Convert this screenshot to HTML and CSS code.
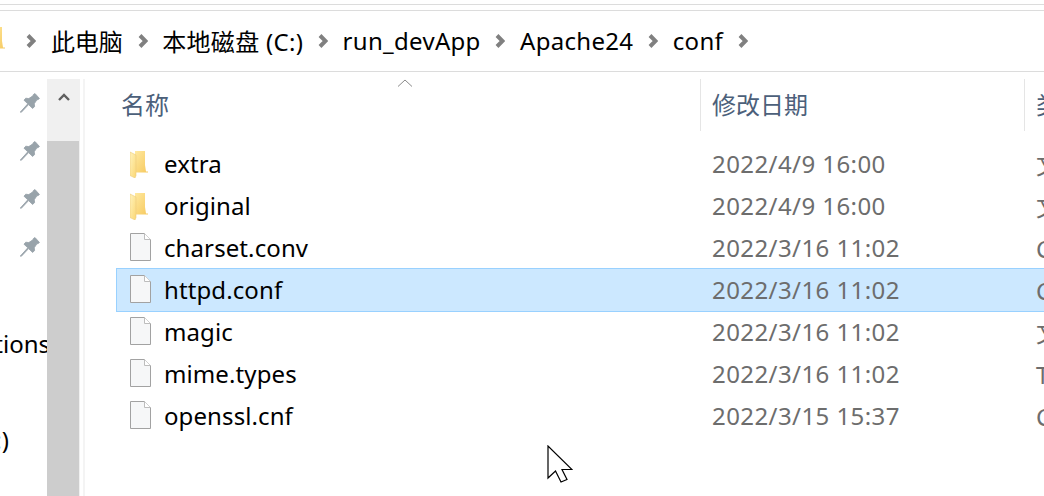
FILE: index.html
```html
<!DOCTYPE html>
<html lang="zh-CN">

<head>
    <meta charset="UTF-8">
    <title>conf</title>
    <link rel="stylesheet" href="styles.css">
</head>

<body>
    <svg class="defs" width="0" height="0">
        <defs>
            <linearGradient id="foldergrad" x1="0" y1="0" x2="1" y2="1">
                <stop offset="0" stop-color="#ffe99f" />
                <stop offset="1" stop-color="#f6c95f" />
            </linearGradient>
            <linearGradient id="flapgrad" x1="0" y1="0" x2="1" y2="1">
                <stop offset="0" stop-color="#fff3bd" />
                <stop offset="1" stop-color="#fbd774" />
            </linearGradient>
            <symbol id="folder" viewBox="0 0 18 27">
                <path d="M5 0H15V14L16 20.5H18V21.5H5Z" fill="url(#foldergrad)" />
                <path d="M0 1L6 4V24.5L5 27L0 24.5Z" fill="url(#flapgrad)" stroke="#eccb7c" stroke-width="0.6" />
            </symbol>
            <symbol id="file" viewBox="0 0 21 28">
                <path d="M0.5 0.5H14.5L20.5 6.5V27.5H0.5Z" fill="#f6f7f8" stroke="#a2a2a2" />
                <path d="M14.5 0.5V6.5H20.5" fill="#fff" stroke="#bdbdbd" />
            </symbol>
            <symbol id="pin" viewBox="0 0 20 20">
                <path d="M15 0.6L19.4 5.4L18 6.8L17 6.6L14.2 10.8L14.6 13.6L12.6 15.4L8.6 11.6L1 19.6L0.4 19L7.8 10.8L4 7.2L5.8 5.2L8.8 5.6L13 2.8L13.4 1.6Z" fill="#98a3aa" stroke="#98a3aa" stroke-width="0.9" />
            </symbol>
            <symbol id="crumbarrow" viewBox="0 0 10 14">
                <path d="M2 1.5L7.5 7L2 12.5" fill="none" stroke="#808080" stroke-width="4" />
            </symbol>
        </defs>
    </svg>

    <div class="titlestrip"></div>

    <div class="breadcrumb">
        <svg class="crumb_folder" viewBox="0 0 18 27"><use href="#folder" /></svg>
        <svg class="crumb_arrow"><use href="#crumbarrow" /></svg>
        <span>此电脑</span>
        <svg class="crumb_arrow"><use href="#crumbarrow" /></svg>
        <span class="crumb_latin">本地磁盘 (C:)</span>
        <svg class="crumb_arrow"><use href="#crumbarrow" /></svg>
        <span class="crumb_latin">run_devApp</span>
        <svg class="crumb_arrow"><use href="#crumbarrow" /></svg>
        <span class="crumb_latin">Apache24</span>
        <svg class="crumb_arrow"><use href="#crumbarrow" /></svg>
        <span class="crumb_latin">conf</span>
        <svg class="crumb_arrow"><use href="#crumbarrow" /></svg>
    </div>

    <div class="main">
        <div class="sidebar">
            <div class="side_row"><svg class="pin"><use href="#pin" /></svg></div>
            <div class="side_row"><svg class="pin"><use href="#pin" /></svg></div>
            <div class="side_row"><svg class="pin"><use href="#pin" /></svg></div>
            <div class="side_row"><svg class="pin"><use href="#pin" /></svg></div>
            <div class="side_row"></div>
            <div class="side_row side_apps">Applications</div>
            <div class="side_row"></div>
            <div class="side_row side_drive">(D:)</div>
        </div>

        <div class="scrollbar">
            <div class="scroll_btn">
                <svg class="scroll_arrow" viewBox="0 0 12 8"><path d="M1 7L6 2L11 7" fill="none" stroke="#5f5f5f" stroke-width="2.4" /></svg>
            </div>
            <div class="scroll_thumb"></div>
        </div>

        <div class="filelist">
            <div class="head">
                <div class="head_cell">名称</div>
                <div class="head_cell head_sep">修改日期</div>
                <div class="head_cell head_sep">类型</div>
                <svg class="sort_caret" viewBox="0 0 16 8"><path d="M1 7.5L8 1L15 7.5" fill="none" stroke="#8a8a8a" /></svg>
            </div>

            <div class="row">
                <div class="name"><svg class="ic_folder"><use href="#folder" /></svg>extra</div>
                <div class="date">2022/4/9 16:00</div>
                <div class="type">文件夹</div>
            </div>
            <div class="row">
                <div class="name"><svg class="ic_folder"><use href="#folder" /></svg>original</div>
                <div class="date">2022/4/9 16:00</div>
                <div class="type">文件夹</div>
            </div>
            <div class="row">
                <div class="name"><svg class="ic_file"><use href="#file" /></svg>charset.conv</div>
                <div class="date">2022/3/16 11:02</div>
                <div class="type">CONV 文件</div>
            </div>
            <div class="row selected">
                <div class="name"><svg class="ic_file"><use href="#file" /></svg>httpd.conf</div>
                <div class="date">2022/3/16 11:02</div>
                <div class="type">CONF 文件</div>
            </div>
            <div class="row">
                <div class="name"><svg class="ic_file"><use href="#file" /></svg>magic</div>
                <div class="date">2022/3/16 11:02</div>
                <div class="type">文件</div>
            </div>
            <div class="row">
                <div class="name"><svg class="ic_file"><use href="#file" /></svg>mime.types</div>
                <div class="date">2022/3/16 11:02</div>
                <div class="type">TYPES 文件</div>
            </div>
            <div class="row">
                <div class="name"><svg class="ic_file"><use href="#file" /></svg>openssl.cnf</div>
                <div class="date">2022/3/15 15:37</div>
                <div class="type">CNF 文件</div>
            </div>
        </div>
    </div>

    <svg class="cursor" viewBox="0 0 26 38">
        <path d="M1 1V33L8.5 26L14 37L20 34.5L15 24.5H25Z" fill="#fff" stroke="#000" stroke-width="1.2" />
    </svg>
</body>

</html>
```

FILE: styles.css
```css
html,
body {
    margin: 0;
    height: 100%;
    overflow: hidden;
}

body {
    width: 1044px;
    height: 496px;
    background-color: #fff;
    font-family: "Noto Sans", "Noto Sans CJK SC", sans-serif;
    font-size: 24px;
    position: relative;
}

.defs {
    position: absolute;
}

.titlestrip {
    height: 5px;
    margin-top: 4px;
    border-top: 1px solid #dcdcdc;
    border-bottom: 1px solid #dcdcdc;
}

.breadcrumb {
    height: 58px;
    padding-bottom: 2px;
    border-bottom: 1px solid #dcdcdc;
    display: flex;
    align-items: center;
    gap: 13.7px;
    color: #000;
}

.crumb_folder {
    width: 18px;
    height: 27px;
    margin-left: -13px;
    margin-right: 6.5px;
}

.crumb_arrow {
    width: 10px;
    height: 14px;
    margin: 2px 1px 0;
}

.crumb_latin {
    letter-spacing: 0.3px;
}

.main {
    display: flex;
    height: 424px;
    padding-top: 7px;
}

.sidebar {
    width: 47px;
    flex-shrink: 0;
    overflow: hidden;
}

.side_row {
    height: 48px;
    display: flex;
    align-items: center;
    justify-content: flex-end;
    padding-right: 7px;
    white-space: nowrap;
    color: #000;
}

.side_apps {
    padding-right: 0;
    margin-right: -3px;
}

.side_drive {
    padding-right: 38px;
}

.pin {
    width: 20px;
    height: 20px;
}

.scrollbar {
    width: 33px;
    flex-shrink: 0;
    background-color: #f0f0f0;
    display: flex;
    flex-direction: column;
    border-right: 3px solid #fff;
}

.scroll_btn {
    height: 62px;
    display: flex;
    justify-content: center;
    padding-top: 14px;
    box-sizing: border-box;
}

.scroll_arrow {
    width: 12px;
    height: 8px;
}

.scroll_thumb {
    flex: 1;
    width: 32px;
    background-color: #cdcdcd;
}

.filelist {
    flex: 1;
    border-left: 2px solid #f4f4f4;
    padding-left: 32px;
    min-width: 0;
}

.head,
.row {
    display: grid;
    grid-template-columns: 583px 324px 200px;
}

.head {
    height: 64px;
    position: relative;
}

.head_cell {
    height: 52px;
    padding-left: 4px;
    display: flex;
    align-items: center;
    color: #4c607a;
    line-height: 52px;
}

.head_sep {
    border-left: 1px solid #e5e5e5;
    padding-left: 11px;
}

.sort_caret {
    position: absolute;
    left: 280px;
    top: 0;
    width: 16px;
    height: 8px;
}

.row {
    height: 42px;
    align-items: center;
    white-space: nowrap;
}

.selected {
    background-color: #cce8ff;
    outline: 1px solid #99d1ff;
}

.name {
    display: flex;
    align-items: center;
    color: #000;
    letter-spacing: 0.1px;
    padding-bottom: 2px;
}

.ic_folder {
    width: 18px;
    height: 27px;
    margin: 2px 16px 0 13px;
}

.ic_file {
    width: 21px;
    height: 28px;
    margin-left: 13px;
    margin-right: 13px;
}

.date,
.type {
    color: #6d6d6d;
    padding-left: 12px;
    padding-bottom: 2px;
}

.date {
    letter-spacing: 0.42px;
}

.cursor {
    position: absolute;
    left: 547px;
    top: 445px;
    width: 26px;
    height: 38px;
}
```
